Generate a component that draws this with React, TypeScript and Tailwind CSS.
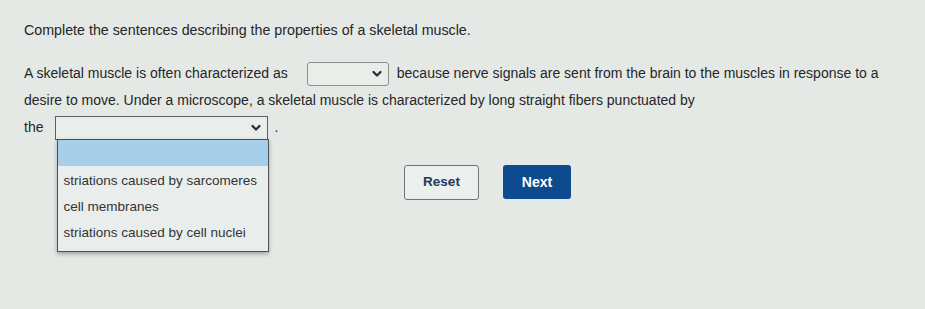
import React from "react";

const Chevron = () => (
  <svg width="10" height="8" viewBox="0 0 10 8" className="shrink-0">
    <polyline points="1.5,2 5,5.5 8.5,2" fill="none" stroke="#2a2a2a" strokeWidth="2.2" strokeLinecap="round" strokeLinejoin="round" />
  </svg>
);

const options = [
  "striations caused by sarcomeres",
  "cell membranes",
  "striations caused by cell nuclei",
];

const App = () => {
  return (
    <div
      className="min-h-screen w-full bg-[#e4e9e6] pl-6 pt-5 text-[#262626]"
      style={{ fontFamily: '"Liberation Sans", Arial, sans-serif' }}
    >
      <h1 className="text-[14.25px] leading-5">
        Complete the sentences describing the properties of a skeletal muscle.
      </h1>

      <p className="mt-5 w-[870px] text-[14px] leading-[27px]">
        A skeletal muscle is often characterized as
        <span className="ml-[19px] mr-[8px] inline-flex h-6 w-[82px] items-center justify-end rounded-[3px] border border-[#8d918f] bg-[#eef2ef]/60 pr-[6px] align-middle">
          <Chevron />
        </span>
        because nerve signals are sent from the brain to the muscles in response to a desire to move. Under a microscope, a skeletal
        muscle is characterized by long straight fibers punctuated by{" "}
        <span className="whitespace-nowrap">
          the
          <span className="relative ml-[12px] mr-[6px] inline-flex h-6 w-[213px] items-center justify-end border border-[#5c5f5e] bg-[#eef2ef]/60 pr-[6px] align-middle">
            <Chevron />
            <span className="absolute left-[1px] top-[22px] z-10 w-[212px] border border-[#4d5050] bg-[#e9eeec] pb-[5px] shadow-[0_2px_4px_rgba(0,0,0,0.3)]">
              <span className="mb-[2px] block h-[26px] bg-[#a8cfea]" />
              {options.map((o) => (
                <span key={o} className="block h-[26px] pl-[5px] text-left text-[13.5px] leading-[26px] text-[#333]">
                  {o}
                </span>
              ))}
            </span>
          </span>
          .
        </span>
      </p>

      <div className="ml-[380px] mt-6 flex gap-6">
        <button className="h-[35px] w-[75px] rounded-[3px] border border-[#707472] bg-[#f2f5f3]/50 text-[13.5px] font-bold text-[#1f3b5c]">
          Reset
        </button>
        <button className="h-[34px] w-[68px] rounded-[3px] bg-[#0d4a8e] text-[14px] font-bold text-white">
          Next
        </button>
      </div>
    </div>
  );
};

export default App;
